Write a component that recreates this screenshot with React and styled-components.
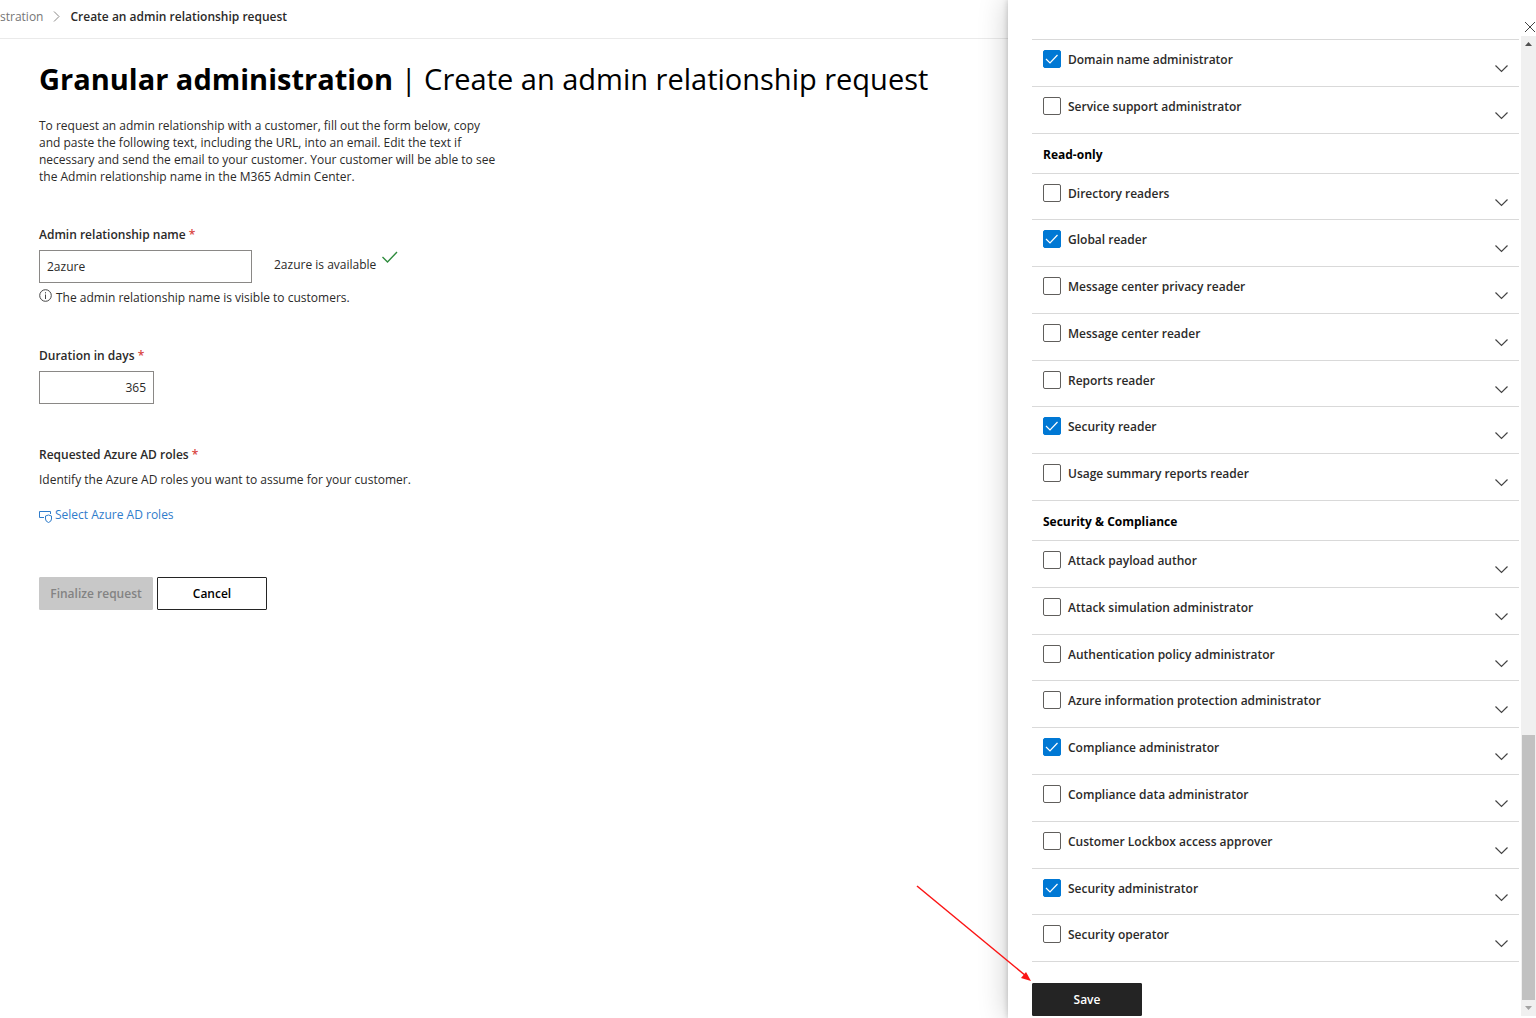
import { useState } from "react";
import styled, { createGlobalStyle } from "styled-components";

const mainStyle = {
  font: `"Open Sans", "Noto Sans", sans-serif`,
  text: "#2b2a29",
  line: "#d9d9d9",
  point: "#0078d4",
};

const GlobalStyle = createGlobalStyle`
  * {
    box-sizing: border-box;
  }
  body {
    margin: 0;
    background: #fff;
    color: ${mainStyle.text};
    font-family: ${mainStyle.font};
    font-size: 12px;
    line-height: 17px;
  }
  button, input {
    font: inherit;
    color: inherit;
  }
`;

const Page = styled.div`
  display: flex;
  min-height: 100vh;
  overflow: hidden;
`;

const Main = styled.main`
  flex: 1;
  min-width: 0;
`;

const Breadcrumb = styled.nav`
  display: flex;
  align-items: center;
  height: 39px;
  padding-bottom: 6px;
  border-bottom: 1px solid #eaeaea;
  a {
    color: #767676;
    text-decoration: none;
  }
  svg {
    margin: 0 10px;
  }
  span {
    font-weight: 600;
  }
`;

const Content = styled.div`
  padding: 19px 39px;
`;

const Title = styled.h1`
  margin: 0 0 18px;
  color: #000;
  font-size: 29px;
  font-weight: 400;
  line-height: 41px;
  white-space: nowrap;
  b {
    font-weight: 700;
  }
`;

const Intro = styled.p`
  max-width: 480px;
  margin: 0;
`;

const Field = styled.div`
  margin-top: 41px;
`;

const Label = styled.label`
  display: block;
  margin-bottom: 7px;
  font-weight: 600;
  em {
    color: #d9433f;
    font-style: normal;
  }
`;

const GroupTitle = styled(Label).attrs({ as: "h2" })`
  margin: 0 0 8px;
  padding-top: 1px;
  font-size: 12px;
`;

const InputRow = styled.div`
  display: flex;
  gap: 22px;
`;

const TextInput = styled.input`
  width: ${(props) => props.$width}px;
  height: 33px;
  padding: 0 7px;
  border: 1px solid #8a8886;
  background: #fff;
  text-align: ${(props) => props.$align || "left"};
`;

const Available = styled.div`
  display: flex;
  gap: 6px;
  padding-top: 6px;
  svg {
    margin-top: -6px;
  }
`;

const Hint = styled.div`
  display: flex;
  gap: 4px;
  margin-top: 6px;
`;

const RoleText = styled.p`
  margin: 0 0 18px;
`;

const RoleLink = styled.a`
  display: inline-flex;
  align-items: center;
  gap: 3px;
  color: #2f7ccb;
  text-decoration: none;
  svg {
    margin-top: 4px;
  }
`;

const Actions = styled.div`
  display: flex;
  gap: 4px;
  margin-top: 50px;
`;

const Button = styled.button`
  width: ${(props) => props.$width || 110}px;
  height: 33px;
  padding: 0;
  border: 1px solid #242424;
  border-radius: 1px;
  background: ${(props) => (props.$dark ? "#242424" : "#fff")};
  color: ${(props) => (props.$dark ? "#fff" : "#000")};
  font-weight: 600;
  &:disabled {
    border-color: #c8c8c8;
    background: #c8c8c8;
    color: #838383;
  }
`;

const Panel = styled.aside`
  position: relative;
  display: flex;
  flex: 0 0 528px;
  flex-direction: column;
  background: #fff;
  box-shadow: 0 0 28px rgba(0, 0, 0, 0.22), 0 0 6px rgba(0, 0, 0, 0.2);
`;

const PanelTop = styled.div`
  display: flex;
  align-items: flex-end;
  justify-content: flex-end;
  height: 36px;
`;

const IconButton = styled.button`
  display: flex;
  padding: 0;
  border: 0;
  background: none;
  cursor: pointer;
`;

const PanelBody = styled.div`
  display: flex;
  flex: 1;
  padding-bottom: 2px;
`;

const PanelContent = styled.div`
  display: flex;
  flex: 1;
  flex-direction: column;
  padding: 3px 2px 0 24px;
`;

const RoleList = styled.div`
  display: flex;
  flex: 1;
  flex-direction: column;
  border-top: 1px solid ${mainStyle.line};
`;

const RoleGroup = styled.h3`
  flex: 0 0 40px;
  margin: 0;
  padding: 12px 11px 0;
  border-bottom: 1px solid ${mainStyle.line};
  color: #000;
  font-size: 12px;
  font-weight: 700;
`;

const Row = styled.div`
  display: flex;
  flex: 1 0 46px;
  align-items: flex-start;
  justify-content: space-between;
  padding: 10px 11px 0;
  border-bottom: 1px solid ${mainStyle.line};
  ${IconButton} {
    margin-top: 11px;
  }
`;

const RoleLabel = styled.label`
  display: flex;
  gap: 7px;
  font-weight: 600;
  line-height: 20px;
`;

const CheckWrap = styled.span`
  display: grid;
  height: 18px;
  input,
  svg {
    grid-area: 1 / 1;
  }
  svg {
    pointer-events: none;
  }
`;

const CheckInput = styled.input`
  width: 18px;
  height: 18px;
  margin: 0;
  border: 1px solid #605e5c;
  border-radius: 2px;
  appearance: none;
  background: #fff;
  &:checked {
    border-color: ${mainStyle.point};
    background: ${mainStyle.point};
  }
`;

const PanelFooter = styled.div`
  position: relative;
  margin-top: 21px;
`;

const Arrow = styled.svg`
  position: absolute;
  right: 100%;
  bottom: 100%;
  pointer-events: none;
`;

const Scrollbar = styled.div`
  display: flex;
  flex: 0 0 15px;
  flex-direction: column;
  align-items: center;
  background: #f0f0f0;
  svg {
    flex: 0 0 16px;
  }
`;

const ScrollTrack = styled.div`
  display: flex;
  flex: 1;
  align-items: flex-end;
  width: 13px;
`;

const ScrollThumb = styled.div`
  width: 100%;
  height: 28%;
  background: #c1c1c1;
`;

const ROLES = [
  {
    rows: [
      ["Domain name administrator", true],
      ["Service support administrator", false],
    ],
  },
  {
    group: "Read-only",
    rows: [
      ["Directory readers", false],
      ["Global reader", true],
      ["Message center privacy reader", false],
      ["Message center reader", false],
      ["Reports reader", false],
      ["Security reader", true],
      ["Usage summary reports reader", false],
    ],
  },
  {
    group: "Security & Compliance",
    rows: [
      ["Attack payload author", false],
      ["Attack simulation administrator", false],
      ["Authentication policy administrator", false],
      ["Azure information protection administrator", false],
      ["Compliance administrator", true],
      ["Compliance data administrator", false],
      ["Customer Lockbox access approver", false],
      ["Security administrator", true],
      ["Security operator", false],
    ],
  },
];

const ChevronDown = () => (
  <svg width="13" height="16" fill="none" stroke="#444" strokeWidth="1.2">
    <path d="M.5 4.5 6.5 10.5 12.5 4.5" />
  </svg>
);

const Role = ({ name, on }) => {
  const [checked, setChecked] = useState(on);

  return (
    <Row>
      <RoleLabel>
        <CheckWrap>
          <CheckInput
            type="checkbox"
            checked={checked}
            onChange={() => setChecked(!checked)}
          />
          {checked && (
            <svg width="18" height="18" fill="none" stroke="#fff" strokeWidth="1.2">
              <path d="M3 9 7 13 14.5 5" />
            </svg>
          )}
        </CheckWrap>
        {name}
      </RoleLabel>
      <IconButton type="button" aria-label={`Expand ${name}`}>
        <ChevronDown />
      </IconButton>
    </Row>
  );
};

export default function App() {
  return (
    <Page>
      <GlobalStyle />
      <Main>
        <Breadcrumb>
          <a href="#administration">stration</a>
          <svg width="7" height="12" fill="none" stroke="#8a8886">
            <path d="M1 1.5 6 6.5 1 11.5" />
          </svg>
          <span>Create an admin relationship request</span>
        </Breadcrumb>

        <Content>
          <Title>
            <b>Granular administration</b> | Create an admin relationship request
          </Title>
          <Intro>
            To request an admin relationship with a customer, fill out the form
            below, copy
            <br />
            and paste the following text, including the URL, into an email. Edit
            the text if
            <br />
            necessary and send the email to your customer. Your customer will be
            able to see
            <br />
            the Admin relationship name in the M365 Admin Center.
          </Intro>

          <Field>
            <Label htmlFor="name">
              Admin relationship name <em>*</em>
            </Label>
            <InputRow>
              <TextInput id="name" $width={213} defaultValue="2azure" />
              <Available>
                2azure is available
                <svg width="16" height="14" fill="none" stroke="#2e8b3d" strokeWidth="1.4">
                  <path d="M.5 7 5.5 12 15 2" />
                </svg>
              </Available>
            </InputRow>
            <Hint>
              <svg width="13" height="13" fill="none" stroke="#444">
                <circle cx="6.5" cy="6.5" r="5.8" />
                <path d="M6.5 5.5V10M6.5 3.2V4.4" />
              </svg>
              The admin relationship name is visible to customers.
            </Hint>
          </Field>

          <Field>
            <Label htmlFor="days">
              Duration in days <em>*</em>
            </Label>
            <TextInput id="days" $width={115} $align="right" defaultValue="365" />
          </Field>

          <Field>
            <GroupTitle>
              Requested Azure AD roles <em>*</em>
            </GroupTitle>
            <RoleText>
              Identify the Azure AD roles you want to assume for your customer.
            </RoleText>
            <RoleLink href="#roles">
              <svg width="13" height="12" fill="none" stroke="#2f7ccb">
                <path d="M5 6.500H.5V.5H11.500V3" />
                <path d="M9.500 4 12.500 5V8Q12.500 10.500 9.500 11.500 6.500 10.500 6.500 8V5Z" />
              </svg>
              Select Azure AD roles
            </RoleLink>
          </Field>

          <Actions>
            <Button type="button" $width={114} disabled>
              Finalize request
            </Button>
            <Button type="button">Cancel</Button>
          </Actions>
        </Content>
      </Main>

      <Panel>
        <PanelTop>
          <IconButton type="button" aria-label="Close">
            <svg width="12" height="16" fill="none" stroke="#444">
              <path d="M1 2 11 12M11 2 1 12" />
            </svg>
          </IconButton>
        </PanelTop>
        <PanelBody>
          <PanelContent>
            <RoleList>
              {ROLES.map(({ group, rows }) => [
                group && <RoleGroup key={group}>{group}</RoleGroup>,
                ...rows.map(([name, on]) => (
                  <Role key={name} name={name} on={on} />
                )),
              ])}
            </RoleList>
            <PanelFooter>
              <Arrow width="116" height="98">
                <path d="M1 1 110 91" stroke="#fb1414" strokeWidth="1.5" />
                <path d="M115 96 105 93 110 87Z" fill="#fb1414" />
              </Arrow>
              <Button type="button" $dark>
                Save
              </Button>
            </PanelFooter>
          </PanelContent>
          <Scrollbar>
            <svg width="15" height="16" fill="#505050">
              <path d="M4 10H11L7.500 6Z" />
            </svg>
            <ScrollTrack>
              <ScrollThumb />
            </ScrollTrack>
            <svg width="15" height="16" fill="#a3a3a3">
              <path d="M4 6H11L7.500 10Z" />
            </svg>
          </Scrollbar>
        </PanelBody>
      </Panel>
    </Page>
  );
}
